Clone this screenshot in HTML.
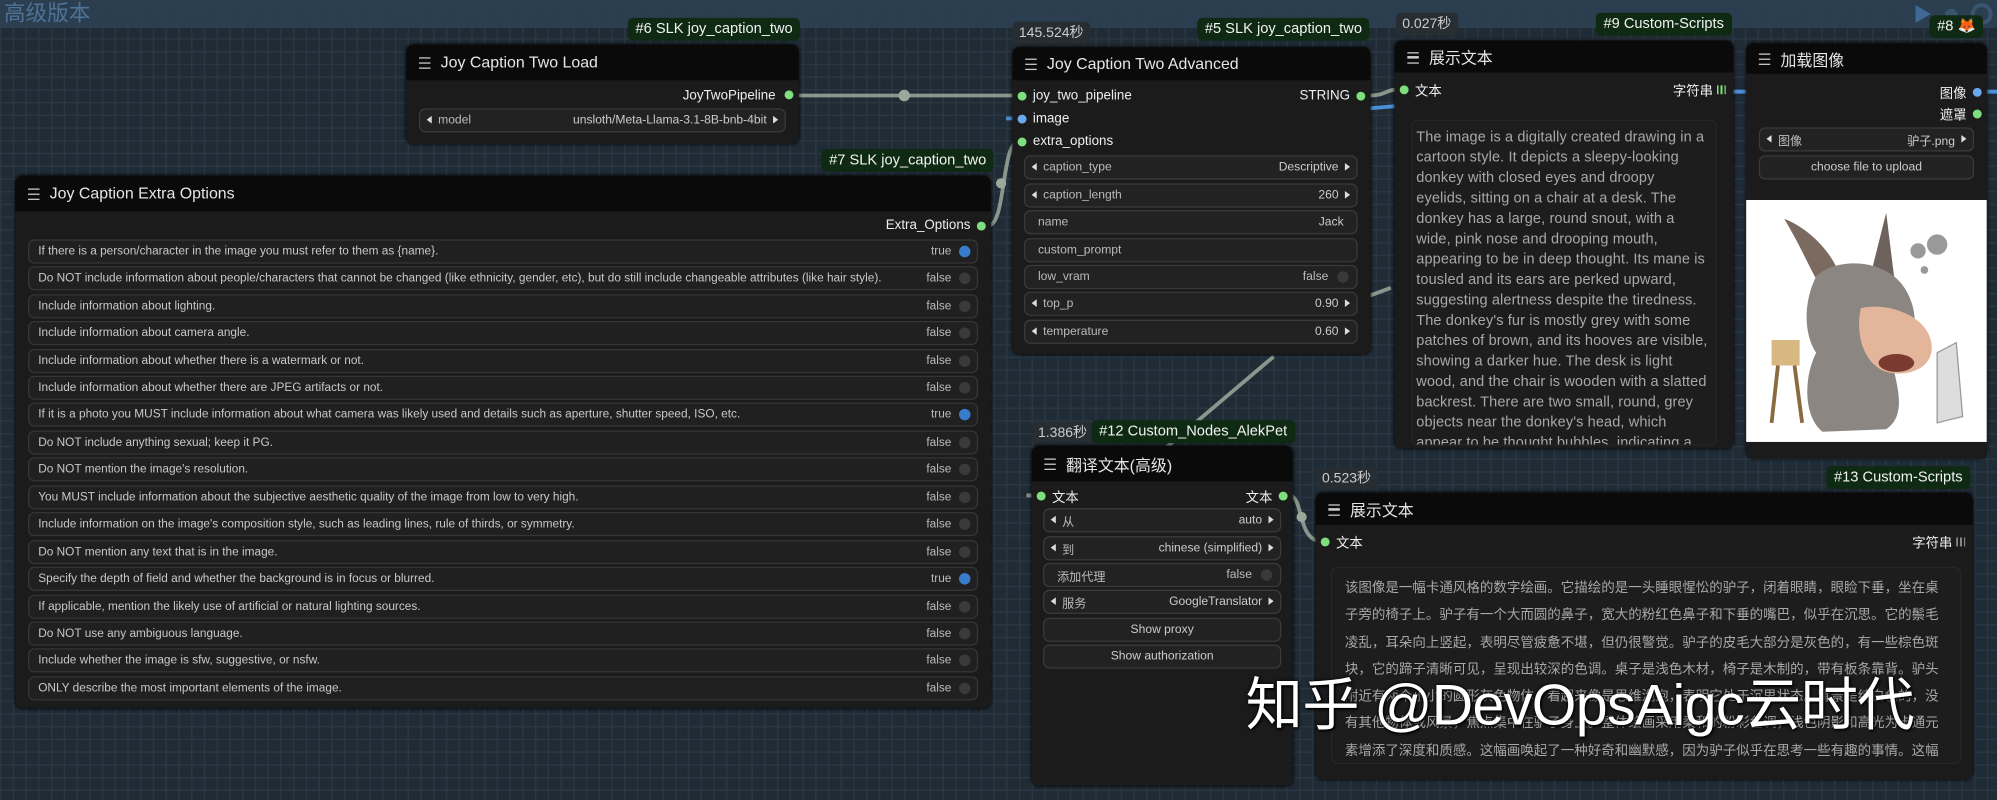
<!DOCTYPE html>
<html><head><meta charset="utf-8"><style>
*{box-sizing:border-box;margin:0;padding:0}
html,body{width:1997px;height:800px;overflow:hidden;background:#1e2a33}
#w{position:absolute;left:0;top:0;width:1568px;height:628px;transform:scale(1.2736);transform-origin:0 0;
font-family:"Liberation Sans","Noto Sans CJK SC",sans-serif;color:#ddd;
background-color:#1f2b35;
background-image:linear-gradient(#2a3742 1px,transparent 1px),linear-gradient(90deg,#2a3742 1px,transparent 1px);
background-size:10px 10px;overflow:hidden}
.grp{position:absolute;left:0;top:0;width:1568px;height:22px;background:#2c4052;opacity:.9}
.grpt{position:absolute;left:3px;top:0;font-size:17px;color:#4f7397;line-height:22px}
.a{position:absolute}
.node{position:absolute;background:#1b1b1c;border-radius:6px;box-shadow:0 0 3px #000}
.tb{position:absolute;left:0;top:0;right:0;background:#0a0a0a;border-radius:6px 6px 0 0;font-size:12.5px;color:#e6e6e6;padding-left:27px;display:flex;align-items:center}
.tb:before{content:"";position:absolute;left:10px;top:50%;margin-top:-4px;width:9px;height:7px;border-top:1.5px solid #ccc;border-bottom:1.5px solid #ccc}
.tb:after{content:"";position:absolute;left:10px;top:50%;width:9px;height:1.5px;background:#ccc;margin-top:-.5px}
.lbl{position:absolute;background:#0e2a12;color:#f2f2f2;font-size:11.5px;height:18px;line-height:18px;padding:0 6px;border-radius:4px}
.tm{position:absolute;background:#262d33;color:#ccc;font-size:11px;height:18px;line-height:18px;padding:0 5px;border-radius:4px}
.w{position:absolute;height:19px;background:#222;border:1px solid #3a3a3a;border-radius:5px;font-size:9.5px;color:#bbb;display:flex;align-items:center;padding:0 10px;justify-content:space-between}
.w.ar{padding:0 14px}
.w.ar:before{content:"";position:absolute;left:5px;top:5px;border:3.5px solid transparent;border-right:4px solid #ddd;border-left:0}
.w.ar:after{content:"";position:absolute;right:5px;top:5px;border:3.5px solid transparent;border-left:4px solid #ddd;border-right:0}
.w span:last-child{color:#ccc}
.dot{position:absolute;width:7px;height:7px;border-radius:50%;background:#7de07d}
.dot.b{background:#6aa8ee}
.io{position:absolute;font-size:10.5px;color:#eee}
.row{position:absolute;left:10px;right:10px;height:19px;background:#202020;border:1px solid #353535;border-radius:5px;font-size:9.3px;color:#c8c8c8;padding-left:7px;line-height:17px;white-space:nowrap}
.row i{position:absolute;right:5px;top:4px;width:9px;height:9px;border-radius:50%;background:#3a3a3a;font-style:normal}
.row b{position:absolute;right:20px;top:0;font-weight:normal;color:#bbb}
.row i.t{background:#3a7ccc}
.btn{position:absolute;height:19px;background:#222;border:1px solid #3a3a3a;border-radius:5px;font-size:9.5px;color:#ccc;text-align:center;line-height:17px}
.ta{position:absolute;background:#1d1d1e;border:1px solid #262626;border-radius:5px;color:#a8a8a8;overflow:hidden}
</style></head><body><div id="w">
<div class="grp"></div><div class="grpt">高级版本</div>
<svg class="a" style="left:1500px;top:2px" width="68" height="18"><path d="M4 2 L16 9 L4 16Z" fill="#3f6a96"/><circle cx="32" cy="10" r="5" fill="#3a5570"/><circle cx="56" cy="9" r="7" fill="none" stroke="#3a5570" stroke-width="3"/></svg>

<svg class="a" style="left:0;top:0" width="1568" height="628">
<g fill="none" stroke="#9aaa9a" stroke-width="3" opacity=".85">
<path d="M627 75 L800 75"/>
<path d="M776 177 C790 177 786 111 800 111"/>
<path d="M1076 75 C1088 75 1088 70 1100 70"/>
<path d="M1000 280 L870 390"/>
<path d="M1076 232 L1092 226"/>
<path d="M1012 389 C1024 389 1018 425 1038 425"/>
<path d="M806 389 L812 389"/>
</g>
<path d="M1076 85 L1100 83 M1350 72 L1372 72 M1555 72 L1568 72" stroke="#4a8fd8" stroke-width="3" fill="none"/>
<path d="M797 93 L790 93" stroke="#4a8fd8" stroke-width="3"/>
<circle cx="710" cy="75" r="4.5" fill="#9aaa9a"/>
<circle cx="786" cy="144" r="4" fill="#9aaa9a"/>
<circle cx="1022" cy="406" r="4" fill="#9aaa9a"/>
</svg>

<div class="lbl" style="left:493px;top:14px">#6 SLK joy_caption_two</div>
<div class="node" style="left:319px;top:35px;width:308px;height:78px">
<div class="tb" style="height:28px">Joy Caption Two Load</div>
<div class="io" style="right:18px;top:34px">JoyTwoPipeline</div><div class="dot" style="right:4px;top:36px"></div>
<div class="w ar" style="left:10px;top:50px;width:288px"><span>model</span><span>unsloth/Meta-Llama-3.1-8B-bnb-4bit</span></div>
</div>

<div class="lbl" style="left:645px;top:117px">#7 SLK joy_caption_two</div>
<div class="node" style="left:12px;top:138px;width:766px;height:418px">
<div class="tb" style="height:28px">Joy Caption Extra Options</div>
<div class="io" style="right:16px;top:33px">Extra_Options</div><div class="dot" style="right:4px;top:36px"></div>
<div class="row" style="top:50px">If there is a person/character in the image you must refer to them as {name}.<b>true</b><i class="t"></i></div>
<div class="row" style="top:71px">Do NOT include information about people/characters that cannot be changed (like ethnicity, gender, etc), but do still include changeable attributes (like hair style).<b>false</b><i></i></div>
<div class="row" style="top:93px">Include information about lighting.<b>false</b><i></i></div>
<div class="row" style="top:114px">Include information about camera angle.<b>false</b><i></i></div>
<div class="row" style="top:136px">Include information about whether there is a watermark or not.<b>false</b><i></i></div>
<div class="row" style="top:157px">Include information about whether there are JPEG artifacts or not.<b>false</b><i></i></div>
<div class="row" style="top:178px">If it is a photo you MUST include information about what camera was likely used and details such as aperture, shutter speed, ISO, etc.<b>true</b><i class="t"></i></div>
<div class="row" style="top:200px">Do NOT include anything sexual; keep it PG.<b>false</b><i></i></div>
<div class="row" style="top:221px">Do NOT mention the image's resolution.<b>false</b><i></i></div>
<div class="row" style="top:243px">You MUST include information about the subjective aesthetic quality of the image from low to very high.<b>false</b><i></i></div>
<div class="row" style="top:264px">Include information on the image's composition style, such as leading lines, rule of thirds, or symmetry.<b>false</b><i></i></div>
<div class="row" style="top:286px">Do NOT mention any text that is in the image.<b>false</b><i></i></div>
<div class="row" style="top:307px">Specify the depth of field and whether the background is in focus or blurred.<b>true</b><i class="t"></i></div>
<div class="row" style="top:329px">If applicable, mention the likely use of artificial or natural lighting sources.<b>false</b><i></i></div>
<div class="row" style="top:350px">Do NOT use any ambiguous language.<b>false</b><i></i></div>
<div class="row" style="top:371px">Include whether the image is sfw, suggestive, or nsfw.<b>false</b><i></i></div>
<div class="row" style="top:393px">ONLY describe the most important elements of the image.<b>false</b><i></i></div>
</div>

<div class="tm" style="left:795px;top:17px">145.524秒</div>
<div class="lbl" style="left:940px;top:14px">#5 SLK joy_caption_two</div>
<div class="node" style="left:795px;top:37px;width:281px;height:241px">
<div class="tb" style="height:26px">Joy Caption Two Advanced</div>
<div class="dot" style="left:4px;top:35px"></div><div class="io" style="left:16px;top:32px">joy_two_pipeline</div>
<div class="io" style="right:16px;top:32px">STRING</div><div class="dot" style="right:4px;top:35px"></div>
<div class="dot b" style="left:4px;top:53px"></div><div class="io" style="left:16px;top:50px">image</div>
<div class="dot" style="left:4px;top:71px"></div><div class="io" style="left:16px;top:68px">extra_options</div>
<div class="w ar" style="left:9px;top:85px;width:262px"><span>caption_type</span><span>Descriptive</span></div>
<div class="w ar" style="left:9px;top:107px;width:262px"><span>caption_length</span><span>260</span></div>
<div class="w" style="left:9px;top:128px;width:262px"><span>name</span><span>Jack</span></div>
<div class="w" style="left:9px;top:150px;width:262px"><span>custom_prompt</span><span></span></div>
<div class="w" style="left:9px;top:171px;width:262px;padding-right:22px"><span>low_vram</span><span>false</span><i style="position:absolute;right:6px;top:4px;width:9px;height:9px;border-radius:50%;background:#3a3a3a"></i></div>
<div class="w ar" style="left:9px;top:192px;width:262px"><span>top_p</span><span>0.90</span></div>
<div class="w ar" style="left:9px;top:214px;width:262px"><span>temperature</span><span>0.60</span></div>
</div>

<div class="tm" style="left:1096px;top:10px">0.027秒</div>
<div class="lbl" style="left:1253px;top:10px">#9 Custom-Scripts</div>
<div class="node" style="left:1095px;top:32px;width:266px;height:320px">
<div class="tb" style="height:25px">展示文本</div>
<div class="dot" style="left:4px;top:35px"></div><div class="io" style="left:16px;top:32px">文本</div>
<div class="io" style="right:16px;top:32px">字符串</div><div class="a" style="right:6px;top:35px;width:7px;height:7px;background:repeating-linear-gradient(90deg,#7de07d 0 1.5px,transparent 1.5px 3px)"></div>
<div class="ta" style="left:13px;top:62px;width:240px;height:256px;padding:5px 6px 5px 3px;font-size:11.4px;line-height:16px;letter-spacing:.1px">The image is a digitally created drawing in a cartoon style. It depicts a sleepy-looking donkey with closed eyes and droopy eyelids, sitting on a chair at a desk. The donkey has a large, round snout, with a wide, pink nose and drooping mouth, appearing to be in deep thought. Its mane is tousled and its ears are perked upward, suggesting alertness despite the tiredness. The donkey's fur is mostly grey with some patches of brown, and its hooves are visible, showing a darker hue. The desk is light wood, and the chair is wooden with a slatted backrest. There are two small, round, grey objects near the donkey's head, which appear to be thought bubbles, indicating a contemplative state. The background is plain white, with no additional objects or scenery, keeping the focus on the donkey. The overall drawing</div>
</div>

<div class="lbl" style="left:1515px;top:12px">#8 🦊</div>
<div class="node" style="left:1371px;top:34px;width:189px;height:326px">
<div class="tb" style="height:24px">加载图像</div>
<div class="io" style="right:16px;top:32px">图像</div><div class="dot b" style="right:4px;top:35px"></div>
<div class="io" style="right:16px;top:49px">遮罩</div><div class="dot" style="right:4px;top:52px"></div>
<div class="w ar" style="left:10px;top:66px;width:169px"><span>图像</span><span>驴子.png</span></div>
<div class="btn" style="left:10px;top:88px;width:169px">choose file to upload</div>
<svg class="a" style="left:0;top:123px" width="189" height="190" viewBox="0 0 189 190">
<rect width="189" height="190" fill="#fff"/>
<rect x="20" y="110" width="22" height="20" fill="#d9b780"/><path d="M25 130 L20 175 M38 130 L44 175" stroke="#8a6a40" stroke-width="3"/>
<path d="M150 120 L165 112 L170 170 L150 175Z" fill="#ddd" stroke="#999"/>
<path d="M30 15 C45 40 50 55 60 70 L75 65 C70 40 45 20 30 15Z" fill="#7a6a60"/>
<path d="M95 70 L110 10 L118 75Z" fill="#6e625c"/>
<path d="M55 60 C70 45 110 45 125 70 C140 95 130 120 115 130 C120 150 125 170 110 180 L60 182 C45 170 45 140 55 120 C45 105 45 80 55 60Z" fill="#8c8682"/>
<path d="M90 85 C110 80 140 90 145 110 C150 130 130 140 110 135 C95 130 85 110 90 85Z" fill="#e3b59a"/>
<ellipse cx="118" cy="128" rx="14" ry="7" fill="#7a3a30"/>
<circle cx="135" cy="40" r="6" fill="#999"/><circle cx="150" cy="35" r="8" fill="#999"/><circle cx="140" cy="55" r="3" fill="#999"/>
</svg>
</div>

<div class="tm" style="left:810px;top:331px">1.386秒</div>
<div class="lbl" style="left:857px;top:330px">#12 Custom_Nodes_AlekPet</div>
<div class="node" style="left:810px;top:350px;width:205px;height:267px">
<div class="tb" style="height:28px">翻译文本(高级)</div>
<div class="dot" style="left:4px;top:36px"></div><div class="io" style="left:16px;top:33px">文本</div>
<div class="io" style="right:16px;top:33px">文本</div><div class="dot" style="right:4px;top:36px"></div>
<div class="w ar" style="left:9px;top:49px;width:187px"><span>从</span><span>auto</span></div>
<div class="w ar" style="left:9px;top:71px;width:187px"><span>到</span><span>chinese (simplified)</span></div>
<div class="w" style="left:9px;top:92px;width:187px;padding-right:22px"><span>添加代理</span><span>false</span><i style="position:absolute;right:6px;top:4px;width:9px;height:9px;border-radius:50%;background:#3a3a3a"></i></div>
<div class="w ar" style="left:9px;top:113px;width:187px"><span>服务</span><span>GoogleTranslator</span></div>
<div class="btn" style="left:9px;top:135px;width:187px">Show proxy</div>
<div class="btn" style="left:9px;top:156px;width:187px">Show authorization</div>
</div>

<div class="tm" style="left:1033px;top:367px">0.523秒</div>
<div class="lbl" style="left:1434px;top:366px">#13 Custom-Scripts</div>
<div class="node" style="left:1033px;top:387px;width:516px;height:225px">
<div class="tb" style="height:25px">展示文本</div>
<div class="dot" style="left:4px;top:35px"></div><div class="io" style="left:16px;top:32px">文本</div>
<div class="io" style="right:16px;top:32px">字符串</div><div class="a" style="right:6px;top:35px;width:7px;height:7px;background:repeating-linear-gradient(90deg,#888 0 1.5px,transparent 1.5px 3px)"></div>
<div class="ta" style="left:12px;top:58px;width:495px;height:155px;padding:6px 10px;font-size:10.6px;line-height:21.3px">该图像是一幅卡通风格的数字绘画。它描绘的是一头睡眼惺忪的驴子，闭着眼睛，眼睑下垂，坐在桌子旁的椅子上。驴子有一个大而圆的鼻子，宽大的粉红色鼻子和下垂的嘴巴，似乎在沉思。它的鬃毛凌乱，耳朵向上竖起，表明尽管疲惫不堪，但仍很警觉。驴子的皮毛大部分是灰色的，有一些棕色斑块，它的蹄子清晰可见，呈现出较深的色调。桌子是浅色木材，椅子是木制的，带有板条靠背。驴头附近有两个小小的圆形灰色物体，看起来像是思维泡泡，表明它处于沉思状态。背景是纯白色的，没有其他物体或风景，焦点集中在驴子身上。整体绘画采用柔和的粉彩色调，浅色阴影和高光为卡通元素增添了深度和质感。这幅画唤起了一种好奇和幽默感，因为驴子似乎在思考一些有趣的事情。这幅画的构图很好，驴子在画面中心，形成了平衡的构图。阴影和高光的细节给卡通风格增添了逼真的感觉。这幅画很可能是使用数字插画软件创作的，线条流畅、干净，阴影渐变柔和。艺术家的风格是异想天开的，</div>
</div>

<div class="a" style="left:978px;top:524px;font-size:45px;line-height:60px;color:#fff;white-space:nowrap;letter-spacing:-0.5px;text-shadow:0 0 3px #000,1px 1px 2px #000">知乎 @DevOpsAigc云时代</div>
</div></body></html>
